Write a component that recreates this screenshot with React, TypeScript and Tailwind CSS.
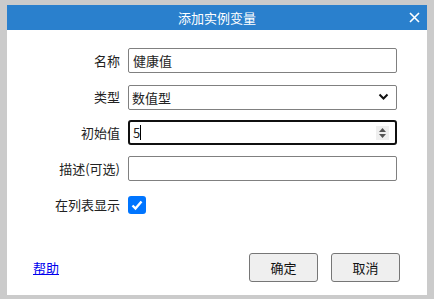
import { useState } from "react";

const FONT = "font-['Microsoft_YaHei','Noto_Sans_CJK_SC',sans-serif]";

const Label = ({ children }: { children: React.ReactNode }) => (
  <div className="flex items-center justify-end text-[13px] text-[#222]">{children}</div>
);

const App = () => {
  const [name, setName] = useState("健康值");
  const [desc, setDesc] = useState("");
  const [show, setShow] = useState(true);

  return (
    <div className={`w-[434px] h-[299px] bg-[#cbcbcb] pt-[5px] px-[7px] pb-[4px] ${FONT}`}>
      <div className="h-full bg-white flex flex-col">
        <div className="h-[25px] bg-[#2a80cd] flex items-center justify-center relative">
          <span className="text-white text-[13px] leading-none">添加实例变量</span>
          <button className="absolute right-[7px] top-[7px] w-[11px] h-[11px]">
            <svg width="11" height="11" viewBox="0 0 11 11">
              <path d="M1 1 L10 10 M10 1 L1 10" stroke="white" strokeWidth="1.6" />
            </svg>
          </button>
        </div>

        <div className="grid grid-cols-[113px_269px] gap-x-[8px] gap-y-[11px] mt-[18px] auto-rows-[25px]">
          <Label>名称</Label>
          <input
            value={name}
            onChange={(e) => setName(e.target.value)}
            className="border border-[#808080] rounded-[2px] px-[4px] text-[13px] text-[#222] outline-none"
          />

          <Label>类型</Label>
          <div className="relative">
            <select className="w-full h-full appearance-none border border-[#808080] rounded-[2px] px-[3px] text-[13px] text-[#222] bg-white outline-none">
              <option>数值型</option>
              <option>字符串</option>
              <option>布尔型</option>
            </select>
            <svg className="absolute right-[8px] top-[9px] pointer-events-none" width="11" height="8" viewBox="0 0 11 8">
              <path d="M1.5 1.5 L5.5 5.5 L9.5 1.5" stroke="#111" strokeWidth="2" fill="none" />
            </svg>
          </div>

          <Label>初始值</Label>
          <div className="relative border-2 border-[#101010] rounded-[3px] flex items-center px-[3px] text-[13px] text-[#222]">
            <span>5</span>
            <span className="w-px h-[15px] bg-black" />
            <div className="absolute right-[6px] top-[4px] w-[13px] h-[14px] bg-[#efefef] flex flex-col items-center justify-center gap-[2px]">
              <svg width="7" height="4" viewBox="0 0 7 4">
                <path d="M0 4 L3.5 0 L7 4 Z" fill="#555" />
              </svg>
              <svg width="7" height="4" viewBox="0 0 7 4">
                <path d="M0 0 L3.5 4 L7 0 Z" fill="#555" />
              </svg>
            </div>
          </div>

          <Label>描述(可选)</Label>
          <input
            value={desc}
            onChange={(e) => setDesc(e.target.value)}
            className="border border-[#808080] rounded-[2px] px-[4px] text-[13px] text-[#222] outline-none"
          />

          <Label>在列表显示</Label>
          <div className="flex items-center">
            <button
              onClick={() => setShow(!show)}
              className={`w-[18px] h-[18px] rounded-[3px] flex items-center justify-center ${
                show ? "bg-[#0075ff]" : "border border-[#767676] bg-white"
              }`}
            >
              {show && (
                <svg width="14" height="14" viewBox="0 0 14 14">
                  <path d="M2.5 7.5 L5.5 10.5 L11.5 3.5" stroke="white" strokeWidth="2.4" fill="none" />
                </svg>
              )}
            </button>
          </div>
        </div>

        <div className="mt-auto mb-[13px] flex items-center px-[26px] pr-[27px]">
          <a href="#" className="text-[13px] text-[#0000ee] underline">帮助</a>
          <div className="ml-auto flex gap-[13px]">
            <button className="w-[69px] h-[29px] bg-[#efefef] border border-[#767676] rounded-[3px] text-[13px] text-[#111]">
              确定
            </button>
            <button className="w-[69px] h-[29px] bg-[#efefef] border border-[#767676] rounded-[3px] text-[13px] text-[#111]">
              取消
            </button>
          </div>
        </div>
      </div>
    </div>
  );
};

export default App;
